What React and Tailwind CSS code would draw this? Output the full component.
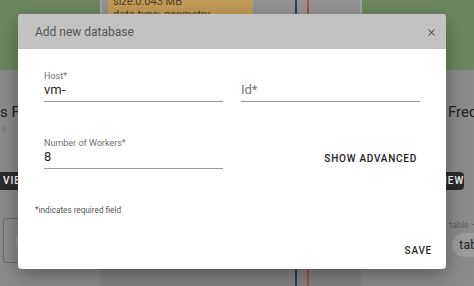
import { X } from 'lucide-react';

function Field({ label, value, placeholder }) {
  return (
    <div className="flex flex-col">
      <div className="h-[11px] text-[9px] leading-[11px] text-[#707070]">{label}</div>
      <div className="h-[20px] pb-[4px] border-b border-[#9a9a9a] text-[13px] leading-[16px]">
        {value ? <span className="text-[#1f1f1f]">{value}</span> : <span className="text-[#767676]">{placeholder}</span>}
      </div>
    </div>
  );
}

function Backdrop() {
  return (
    <div className="flex flex-col h-full">
      {/* top strip */}
      <div className="flex h-[70px] shrink-0">
        <div className="w-[100px] shrink-0 bg-[#6c8860]" />
        <div className="w-[262px] shrink-0 flex bg-[#939393] border-x-2 border-[#a3a3a3] pl-[6px]">
          <div className="w-[145px] shrink-0 bg-[#c29c56] px-[5px] -mt-[5px] text-[11px] leading-[13px] text-[#4d4128] whitespace-nowrap">
            <div>size:0.043 MB</div>
            <div>data type: geometry</div>
          </div>
          <div className="w-[42px] shrink-0" />
          <div className="w-[2px] shrink-0 bg-[#2f3f5c]" />
          <div className="w-[10px] shrink-0" />
          <div className="w-[2px] shrink-0 bg-[#a0554a]" />
        </div>
        <div className="flex-1 min-w-0 bg-[#6c8860]" />
      </div>
      {/* lower area */}
      <div className="flex flex-1">
        <div className="w-[100px] shrink-0 bg-[#8b8b8b] flex flex-col">
          <div className="pt-[32px] text-[15px] leading-[20px] text-[#202020]">s F</div>
          <div className="pl-[2px] text-[9px] leading-[12px] text-[#6f6f6f]">s</div>
          <div className="mt-[38px] h-[18px] w-[40px] bg-[#2b2b2b] text-white text-[10px] leading-[18px] tracking-[1px] pl-[3px] font-medium">VIEW</div>
          <div className="mt-[28px] ml-[3px] h-[45px] border border-[#6a6a6a] rounded-[3px] flex items-center pl-[12px]">
            <div className="w-[20px] h-[24px] rounded-[10px] bg-[#9b9b9b]" />
          </div>
        </div>
        <div className="w-[262px] shrink-0 flex bg-[#848484] pl-[195px]">
          <div className="w-[2px] shrink-0 bg-[#2f3f5c]" />
          <div className="w-[10px] shrink-0" />
          <div className="w-[2px] shrink-0 bg-[#a0554a]" />
        </div>
        <div className="flex-1 min-w-0 overflow-hidden bg-[#8b8b8b] flex flex-col pl-[82px]">
          <div className="pt-[32px] pl-[4px] text-[15px] leading-[20px] text-[#202020] whitespace-nowrap">Frequ</div>
          <div className="h-[12px]" />
          <div className="mt-[38px] h-[18px] w-[20px] bg-[#2b2b2b] rounded-r-[4px] text-white text-[10px] leading-[18px] tracking-[1px] font-medium overflow-hidden whitespace-nowrap">
            IEW
          </div>
          <div className="mt-[30px] pl-[5px] text-[9px] leading-[11px] text-[#5c5c5c] whitespace-nowrap">table —</div>
          <div className="mt-[2px] ml-[8px] h-[24px] w-[40px] rounded-full bg-[#9b9b9b] text-[13px] leading-[24px] pl-[7px] text-[#2a2a2a] whitespace-nowrap">table</div>
        </div>
      </div>
    </div>
  );
}

export default function App() {
  return (
    <div className="relative w-[474px] h-[286px] overflow-hidden font-['Roboto',sans-serif]">
      <Backdrop />

      <div className="absolute left-[18px] top-[14px] w-[428px] h-[255px] rounded-[4px] bg-white shadow-[0_6px_20px_rgba(0,0,0,0.35)] overflow-hidden flex flex-col">
        <div className="h-[35px] shrink-0 bg-[#c2c2c2] flex items-center justify-between pl-[17px] pr-[9px]">
          <span className="text-[12px] text-[#555555]">Add new database</span>
          <X size={11} strokeWidth={2.2} className="text-[#444444] mt-[1px]" />
        </div>

        <div className="flex-1 flex flex-col px-[17px]">
          <div className="pt-[22px] px-[9px] grid grid-cols-2 gap-x-[18px] gap-y-[36px]">
            <Field label="Host*" value="vm-" />
            <Field placeholder="Id*" />
            <Field label="Number of Workers*" value="8" />
            <div className="flex items-end justify-end pb-[4px] pr-[3px]">
              <span className="text-[10px] leading-[13px] font-medium tracking-[0.75px] text-[#222222]">SHOW ADVANCED</span>
            </div>
          </div>

          <div className="mt-[36px] text-[8.2px] leading-[11px] text-[#555555]">*indicates required field</div>

          <div className="mt-auto flex justify-end pb-[12px]">
            <span className="text-[10px] leading-[13px] font-medium tracking-[0.75px] text-[#2a2a2a] -mr-[3px]">SAVE</span>
          </div>
        </div>
      </div>
    </div>
  );
}
